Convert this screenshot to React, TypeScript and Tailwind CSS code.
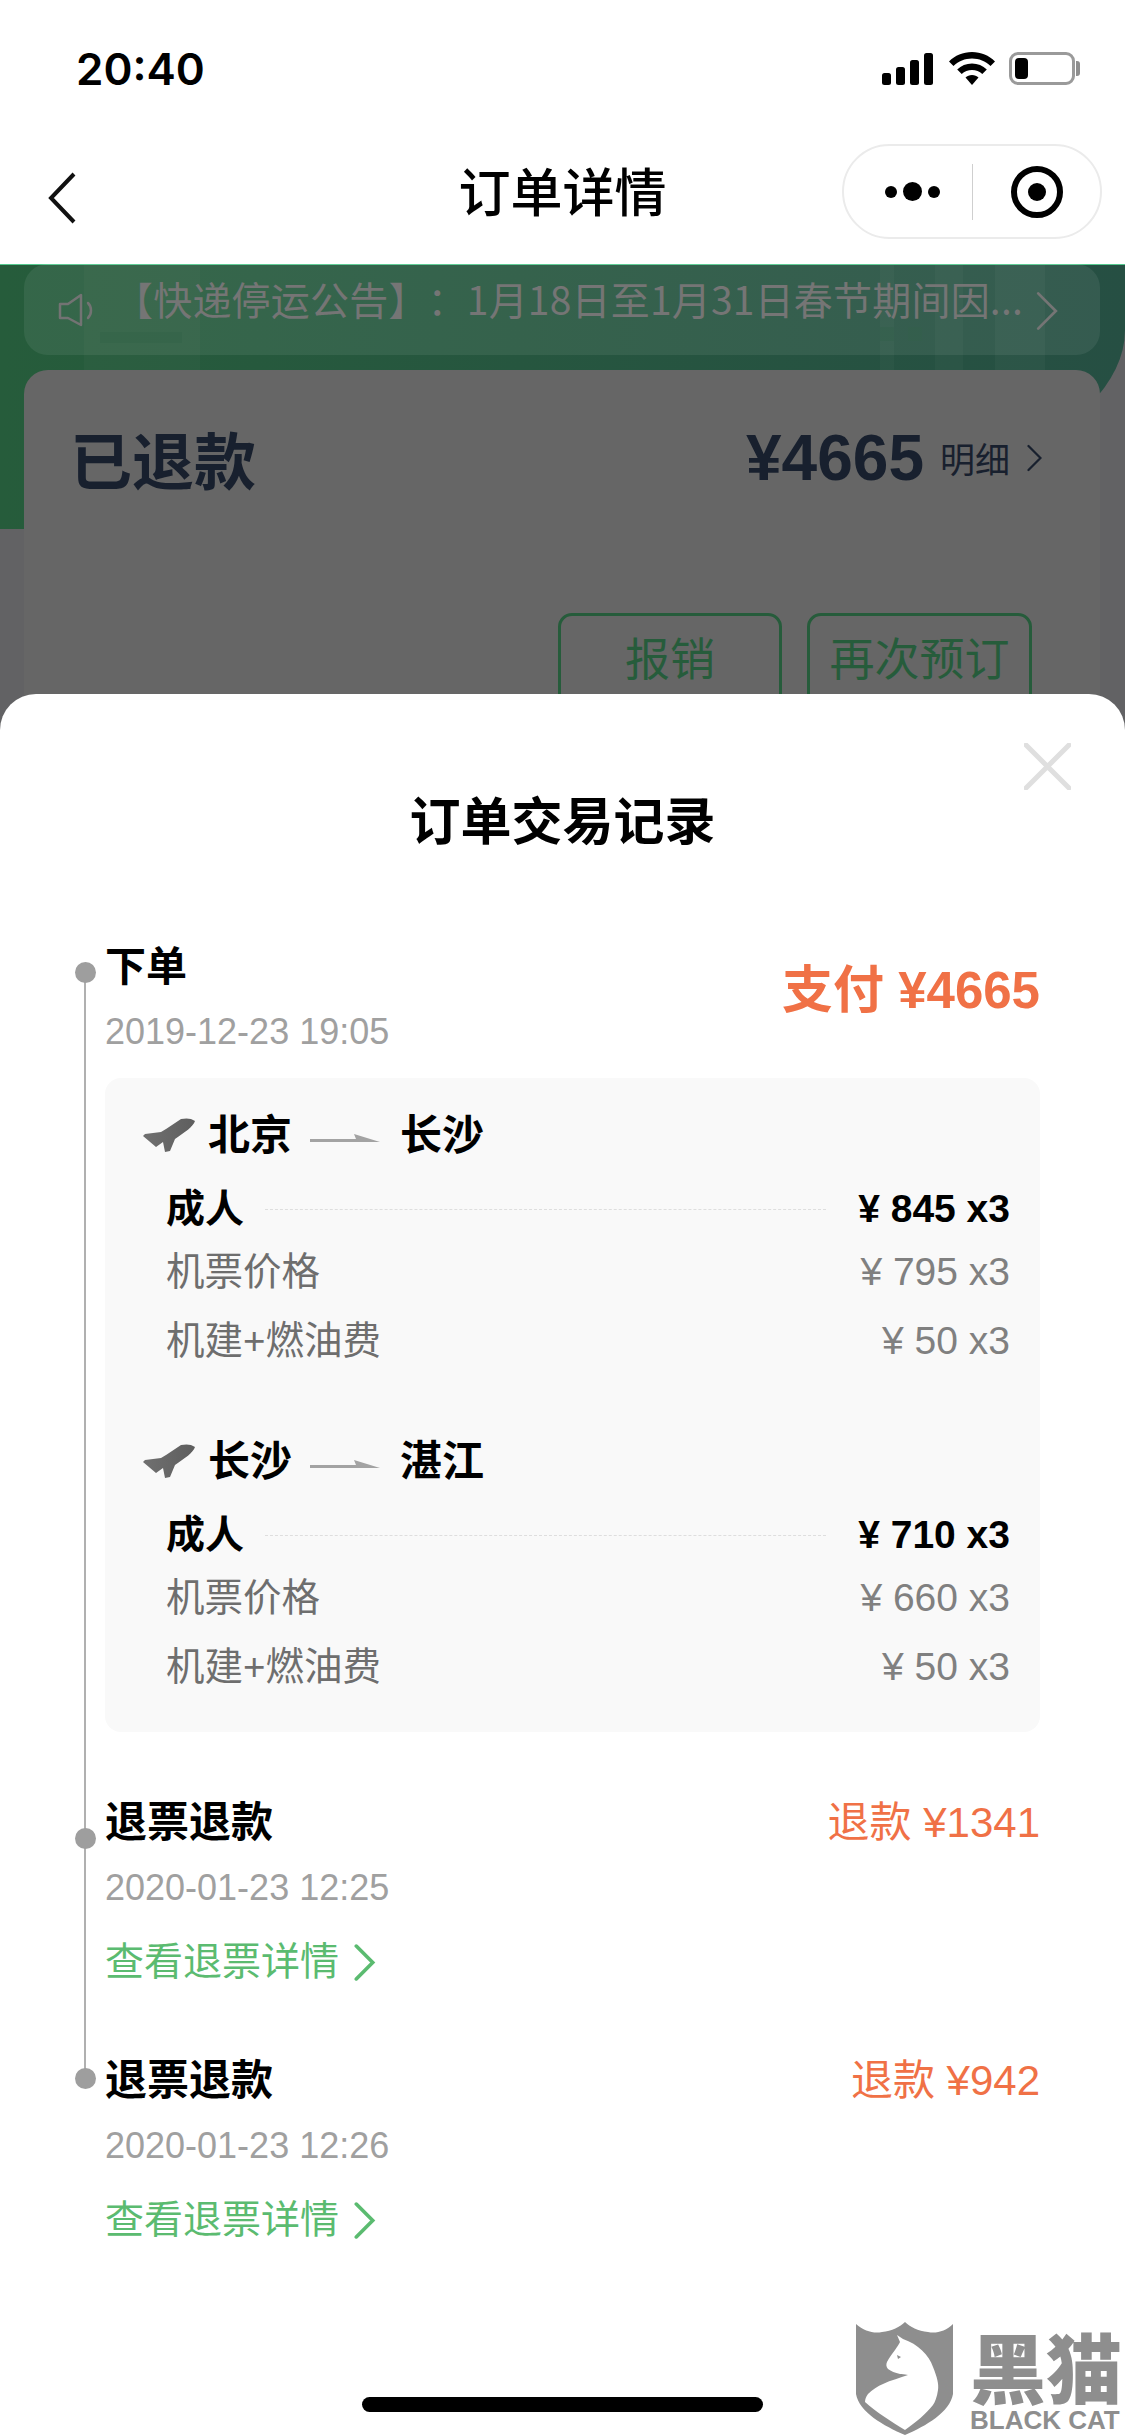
import React from "react";

function Chevron({ className, stroke, width = 3 }: { className: string; stroke: string; width?: number }) {
  return (
    <svg className={className} viewBox="0 0 20 36" fill="none">
      <path d="M2 2 L18 18 L2 34" stroke={stroke} strokeWidth={width} strokeLinecap="round" strokeLinejoin="miter" />
    </svg>
  );
}

function StatusIcons() {
  return (
    <div className="flex items-center">
      <svg className="w-[52px] h-[32px] mr-[15px]" viewBox="0 0 52 32" fill="#000">
        <rect x="0" y="20" width="9" height="12" rx="2.5" />
        <rect x="14" y="14" width="9" height="18" rx="2.5" />
        <rect x="28" y="7" width="9" height="25" rx="2.5" />
        <rect x="42" y="0" width="9" height="32" rx="2.5" />
      </svg>
      <svg className="w-[46px] h-[33px] mr-[14px]" viewBox="0 0 46 33" fill="#000">
        <path d="M23 0 C32 0 40 3.500 46 9.500 L41.500 14 C36.500 9.200 30 6.500 23 6.500 C16 6.500 9.500 9.200 4.500 14 L0 9.500 C6 3.500 14 0 23 0 Z" />
        <path d="M23 11.500 C28.800 11.500 33.800 13.700 37.800 17.500 L33.300 22 C30.500 19.500 27 18 23 18 C19 18 15.500 19.500 12.700 22 L8.200 17.500 C12.200 13.700 17.200 11.500 23 11.500 Z" />
        <path d="M23 23 C25.600 23 27.800 24 29.500 25.500 L23 33 L16.500 25.500 C18.200 24 20.400 23 23 23 Z" />
      </svg>
      <div className="relative w-[66px] h-[33px] rounded-[9px] border-[3px] border-[#9a9a9a] p-[3px]">
        <div className="w-[13px] h-full rounded-[4px] bg-black" />
        <div className="absolute left-[64px] top-[6px] w-[4px] h-[15px] rounded-r-[3px] bg-[#8e8e8e]" />
      </div>
    </div>
  );
}

function Plane() {
  return (
    <svg className="w-[52px] h-[36px] shrink-0" viewBox="0 0 52 36">
      <defs>
        <linearGradient id="planeFill" x1="0" y1="0" x2="1" y2="0">
          <stop offset="0" stopColor="#707070" />
          <stop offset="1" stopColor="#5e5e5e" />
        </linearGradient>
      </defs>
      <path
        d="M52 3 C48 0 43 0 38 1 L23 11 L18 14 L2 16 L0 18 L13 29 L20 24 L22 34 L27 33 L32 21 C42 14 50 9 52 3 Z"
        fill="url(#planeFill)"
      />
    </svg>
  );
}

function RouteArrow() {
  return (
    <svg className="w-[70px] h-[10px] shrink-0" viewBox="0 0 70 10">
      <path d="M0 5 L46 5 L44 0 L70 8 L0 8 Z" fill="#a3a3a3" />
    </svg>
  );
}

function Segment({ from, to, adult, ticket, fee }: { from: string; to: string; adult: string; ticket: string; fee: string }) {
  return (
    <div>
      <div className="flex items-center pl-[38px] h-[48px] text-[42px] leading-[48px] font-semibold text-black">
        <Plane />
        <span className="ml-[13px]">{from}</span>
        <span className="ml-[18px] mt-[6px] flex"><RouteArrow /></span>
        <span className="ml-[20px]">{to}</span>
      </div>
      <div className="mt-[19px] pl-[61px] pr-[30px]">
        <div className="flex items-center h-[60px] text-[39px] font-bold text-black">
          <span className="font-semibold">成人</span>
          <div className="flex-1 ml-[21px] mr-[32px] border-t border-dashed border-[#dedede]" />
          <span>{adult}</span>
        </div>
        <div className="flex justify-between items-center h-[60px] mt-[3px] text-[38.500px] text-[#6e6e6e]">
          <span>机票价格</span>
          <span className="text-[39px] text-[#808080]">{ticket}</span>
        </div>
        <div className="flex justify-between items-center h-[60px] mt-[9px] text-[38.500px] text-[#6e6e6e]">
          <span>机建+燃油费</span>
          <span className="text-[39px] text-[#808080]">{fee}</span>
        </div>
      </div>
    </div>
  );
}

function Refund({ date, amount, dot }: { date: string; amount: string; dot: string }) {
  return (
    <div className="relative">
      <div className={dot} />
      <div className="flex justify-between items-center h-[48px]">
        <span className="text-[42px] leading-[48px] font-semibold text-black">退票退款</span>
        <span className="text-[42px] leading-[48px] text-[#f07146]">{amount}</span>
      </div>
      <div className="mt-[19px] h-[44px] text-[36px] leading-[44px] text-[#a0a0a0]">{date}</div>
      <div className="mt-[28px] h-[48px] flex items-center text-[39px] text-[#5bbb70]">
        <span>查看退票详情</span>
        <Chevron className="ml-[14px] w-[23px] h-[37px]" stroke="#5bbb70" width={3.500} />
      </div>
    </div>
  );
}

export default function App() {
  return (
    <div className="relative w-[1125px] h-[2436px] overflow-hidden bg-white font-['Liberation_Sans','Noto_Sans_CJK_SC',sans-serif]">
      {/* status bar */}
      <div className="h-[136px] pl-[76px] pr-[50px] pt-[52px] flex justify-between items-start">
        <span className="font-['Inter',sans-serif] text-[44px] leading-[34px] font-semibold text-black">20:40</span>
        <StatusIcons />
      </div>

      {/* navigation */}
      <div className="relative h-[128px] flex items-start justify-center">
        <svg className="absolute left-[47px] top-[35px] w-[30px] h-[54px]" viewBox="0 0 30 54" fill="none">
          <path d="M27 3 L4 27 L27 51" stroke="#111" strokeWidth="4" />
        </svg>
        <span className="mt-[25px] text-[52px] leading-[58px] font-medium text-black font-['Noto_Sans_CJK_SC',sans-serif]">订单详情</span>
        <div className="absolute left-[842px] top-[8px] w-[260px] h-[95px] rounded-full border-2 border-[#ebebeb] bg-white flex items-center">
          <div className="w-[128px] flex items-center justify-center pl-[8px] gap-[6px]">
            <div className="w-[12px] h-[12px] rounded-full bg-black" />
            <div className="w-[19px] h-[19px] rounded-full bg-black" />
            <div className="w-[12px] h-[12px] rounded-full bg-black" />
          </div>
          <div className="w-[1px] h-[56px] bg-[#cfcfcf]" />
          <div className="flex-1 flex items-center justify-center">
            <div className="w-[52px] h-[52px] rounded-full border-[6px] border-black flex items-center justify-center">
              <div className="w-[18px] h-[18px] rounded-full bg-black" />
            </div>
          </div>
        </div>
      </div>

      {/* dimmed page underneath */}
      <div className="relative h-[2172px] bg-[#626264]">
        <div className="relative h-[265px] border-t border-[#55c98f] rounded-br-[480px_199px] bg-gradient-to-r from-[#265c3b] to-[#264f43] overflow-hidden">
          <svg className="absolute left-0 top-0 w-[1125px] h-[106px]" viewBox="0 0 1125 106" fill="none">
            <rect x="84" y="0" width="116" height="106" fill="#ffffff" opacity="0.025" />
            <rect x="100" y="67" width="82" height="11" fill="#1f5236" opacity="0.35" />
            <rect x="880" y="0" width="14" height="106" fill="#ffffff" opacity="0.025" />
            <rect x="935" y="0" width="28" height="106" fill="#ffffff" opacity="0.025" />
            <rect x="995" y="0" width="50" height="106" fill="#ffffff" opacity="0.03" />
            <rect x="880" y="62" width="14" height="14" fill="#24543d" opacity="0.5" />
            <rect x="908" y="62" width="14" height="14" fill="#24543d" opacity="0.5" />
          </svg>
        </div>
        <div className="absolute left-[24px] top-0 w-[1076px] h-[91px] rounded-[24px] bg-white/[0.07] flex items-start">
          <svg className="ml-[33px] mt-[29px] w-[38px] h-[34px] shrink-0" viewBox="0 0 38 34" fill="none" stroke="#737373" strokeWidth="2.500">
            <path d="M3 11 L11 11 L24 2 L24 32 L11 25 L3 25 Z" strokeLinejoin="round" />
            <path d="M31 10 C35 14 35 21 31 25" strokeLinecap="round" />
          </svg>
          <span className="ml-[19px] mt-[12px] w-[908px] text-[39px] leading-[44px] tracking-[0.2px] whitespace-nowrap text-[#757575] font-['Noto_Sans_CJK_SC',sans-serif] [text-spacing-trim:space-all]">【快递停运公告】：1月18日至1月31日春节期间因...</span>
          <Chevron className="ml-[14px] mt-[27px] w-[22px] h-[40px]" stroke="#757575" width={2.500} />
        </div>
        <div className="absolute left-[24px] top-[106px] w-[1076px] h-[400px] rounded-[24px] bg-[#666666]">
          <div className="flex items-start justify-between pl-[46px] pr-[58px] pt-[52px]">
            <span className="text-[62px] leading-[72px] font-bold text-[#18202e] font-['Noto_Sans_CJK_SC',sans-serif]">已退款</span>
            <div className="flex items-center h-[72px] text-[#18202e]">
              <span className="text-[64px] leading-[72px] font-bold">¥4665</span>
              <span className="ml-[16px] text-[35px] font-['Noto_Sans_CJK_SC',sans-serif]">明细</span>
              <Chevron className="ml-[17px] w-[15px] h-[28px]" stroke="#18202e" width={3} />
            </div>
          </div>
          <div className="flex justify-end gap-[25px] pr-[68px] mt-[119px]">
            <div className="w-[224px] h-[120px] rounded-[14px] border-[3px] border-[#265c3b] text-[45px] text-[#265c3b] text-center pt-[11px] leading-[60px] font-['Noto_Sans_CJK_SC',sans-serif]">报销</div>
            <div className="w-[225px] h-[120px] rounded-[14px] border-[3px] border-[#265c3b] text-[45px] text-[#265c3b] text-center pt-[11px] leading-[60px] font-['Noto_Sans_CJK_SC',sans-serif]">再次预订</div>
          </div>
        </div>
      </div>

      {/* bottom sheet */}
      <div className="absolute left-0 right-0 top-[694px] bottom-0 bg-white rounded-t-[36px] pt-[99px]">
        <svg className="absolute left-[1024px] top-[49px] w-[47px] h-[47px]" viewBox="0 0 47 47" fill="none">
          <path d="M2 2 L45 45 M45 2 L2 45" stroke="#dfdfdf" strokeWidth="5" strokeLinecap="round" />
        </svg>
        <div className="h-[60px] text-center text-[51px] leading-[60px] font-semibold text-black">订单交易记录</div>

        <div className="relative mt-[90px] pl-[105px] pr-[85px]">
          <div className="absolute left-[84px] top-[29px] w-[2px] h-[1106px] bg-[#b0b0b0]" />

          <div className="relative">
            <div className="absolute left-[-30px] top-[19px] w-[21px] h-[21px] rounded-full bg-[#9e9e9e]" />
            <div className="flex justify-between items-start">
              <div>
                <div className="h-[48px] text-[41px] leading-[48px] font-semibold text-black">下单</div>
                <div className="mt-[19px] h-[44px] text-[36px] leading-[44px] text-[#a0a0a0]">2019-12-23 19:05</div>
              </div>
              <div className="mt-[18px] text-[51px] leading-[60px] font-bold text-[#f07146]">支付 ¥4665</div>
            </div>
            <div className="mt-[24px] h-[654px] rounded-[16px] bg-[#f9f9f9] pt-[34px]">
              <Segment from="北京" to="长沙" adult="¥ 845 x3" ticket="¥ 795 x3" fee="¥ 50 x3" />
              <div className="h-[67px]" />
              <Segment from="长沙" to="湛江" adult="¥ 710 x3" ticket="¥ 660 x3" fee="¥ 50 x3" />
            </div>
          </div>

          <div className="mt-[67px]">
            <Refund
              date="2020-01-23 12:25"
              amount="退款 ¥1341"
              dot="absolute left-[-30px] top-[29px] w-[21px] h-[21px] rounded-full bg-[#9e9e9e]"
            />
          </div>
          <div className="mt-[71px]">
            <Refund
              date="2020-01-23 12:26"
              amount="退款 ¥942"
              dot="absolute left-[-30px] top-[11px] w-[21px] h-[21px] rounded-full bg-[#9e9e9e]"
            />
          </div>
        </div>
      </div>

      {/* home indicator */}
      <div className="absolute left-[362px] top-[2397px] w-[401px] h-[15px] rounded-full bg-black" />

      {/* watermark */}
      <div className="absolute left-[856px] top-[2322px] w-[269px] h-[114px] flex items-start text-[#8e8e8e]">
        <svg className="w-[97px] h-[114px] shrink-0" viewBox="0 0 97 114">
          <path d="M0 2 C8 9 18 12 26 10 C36 9 44 5 49 0 C54 5 62 9 72 10 C80 12 90 9 97 2 L97 72 C94 90 70 104 49 113 C28 104 3 90 0 72 Z" fill="#8e8e8e" />
          <path d="M41 13 L47 17 C62 22 73 33 77 45 C81 55 83 62 82 68 C81 75 79 80 77 83 C70 92 60 100 49 108 C36 100 20 90 9 80 C9 77 10 75 12 72 C16 68 22 64 27 62 C35 58 44 56 52 53 C48 52 46 52 44 52 C39 51 35 49 32 47 C30 45 30 42 31 40 C33 36 36 32 39 28 C41 25 43 22 44 20 Z" fill="#ffffff" />
          <path d="M41 33 L45 35 L42 37 Z" fill="#8e8e8e" />
        </svg>
        <div className="ml-[17px] flex flex-col">
          <span className="mt-[7px] text-[76px] leading-[72px] font-black whitespace-nowrap font-['Noto_Sans_CJK_SC',sans-serif]">黑猫</span>
          <span className="mt-[7px] text-[26px] leading-[24px] font-bold whitespace-nowrap">BLACK CAT</span>
        </div>
      </div>
    </div>
  );
}
